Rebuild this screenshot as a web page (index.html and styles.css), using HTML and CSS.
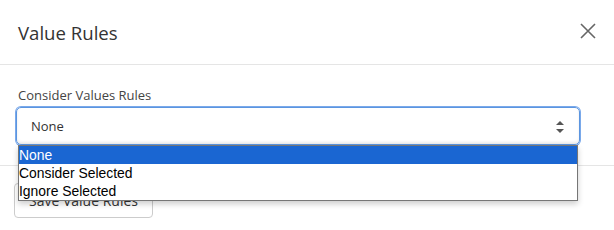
FILE: index.html
```html
<!DOCTYPE html>
<html lang="en">
<head>
  <meta charset="UTF-8">
  <title>Value Rules</title>
  <link rel="stylesheet" href="styles.css">
</head>
<body>
  <div class="modal">
    <div class="modal-header">
      <h2 class="modal-title">Value Rules</h2>
      <button class="close-btn" aria-label="Close">
        <svg width="18" height="18" viewBox="0 0 18 18"><path d="M2 2 L16 16 M16 2 L2 16" stroke="#666" stroke-width="1.6" fill="none"/></svg>
      </button>
    </div>
    <div class="modal-body">
      <label class="field-label">Consider Values Rules</label>
      <div class="select-wrap">
        <div class="select-box">
          <span>None</span>
          <svg class="select-arrows" width="10" height="14" viewBox="0 0 10 14"><path d="M5 1 L9 5 L1 5 Z M1 9 L9 9 L5 13 Z" fill="#555"/></svg>
        </div>
        <ul class="options">
          <li class="selected">None</li>
          <li>Consider Selected</li>
          <li>Ignore Selected</li>
        </ul>
      </div>
    </div>
    <div class="modal-footer">
      <button class="save-btn">Save Value Rules</button>
    </div>
  </div>
</body>
</html>
```

FILE: styles.css
```css
body {
  margin: 0;
  background-color: #fff;
  font-family: "Open Sans", "Noto Sans", sans-serif;
  color: #333;
}

.modal {
  width: 614px;
}

.modal-header {
  height: 65px;
  box-sizing: border-box;
  padding: 0 16px 0 18px;
  display: flex;
  align-items: center;
  justify-content: space-between;
  border-bottom: 1px solid #e5e5e5;
}

.modal-title {
  margin: 0;
  font-size: 18.6px;
  font-weight: normal;
  color: #333;
}

.close-btn {
  background: none;
  border: none;
  padding: 0;
  width: 18px;
  height: 18px;
  margin-right: 1px;
  margin-top: -2px;
  cursor: pointer;
}

.modal-body {
  padding: 21px 34px 20px 16px;
}

.field-label {
  display: block;
  margin: 0 0 3px 2px;
  font-size: 13px;
  line-height: 18px;
  color: #444;
}

.select-wrap {
  position: relative;
}

.select-box {
  height: 38px;
  box-sizing: border-box;
  border: 1px solid #5b95e0;
  border-radius: 5px;
  box-shadow: 0 0 0 1px #7aa9ea, inset 0 -2px 3px rgba(0, 0, 0, 0.08);
  display: flex;
  align-items: center;
  justify-content: space-between;
  padding: 0 14px 0 14px;
  font-size: 13px;
  color: #333;
}

.select-arrows {
  margin-top: 1px;
}

.options {
  position: absolute;
  top: 38px;
  left: 2px;
  right: 2px;
  margin: 0;
  padding: 0;
  list-style: none;
  background: #fff;
  border: 1px solid #767676;
  box-shadow: 0 3px 6px rgba(0, 0, 0, 0.2);
  font-family: "Liberation Sans", Arial, sans-serif;
  font-size: 13.9px;
  color: #000;
  z-index: 10;
}

.options li {
  height: 18px;
  line-height: 18px;
  padding-left: 0;
}

.options li.selected {
  background-color: #1a66d2;
  color: #fff;
}

.modal-footer {
  border-top: 1px solid #e5e5e5;
  padding: 17px 14px;
}

.save-btn {
  height: 35px;
  padding: 0 14px;
  background: #fff;
  border: 1px solid #ccc;
  border-radius: 4px;
  font-family: "Open Sans", "Noto Sans", sans-serif;
  font-size: 14px;
  color: #333;
}
```
